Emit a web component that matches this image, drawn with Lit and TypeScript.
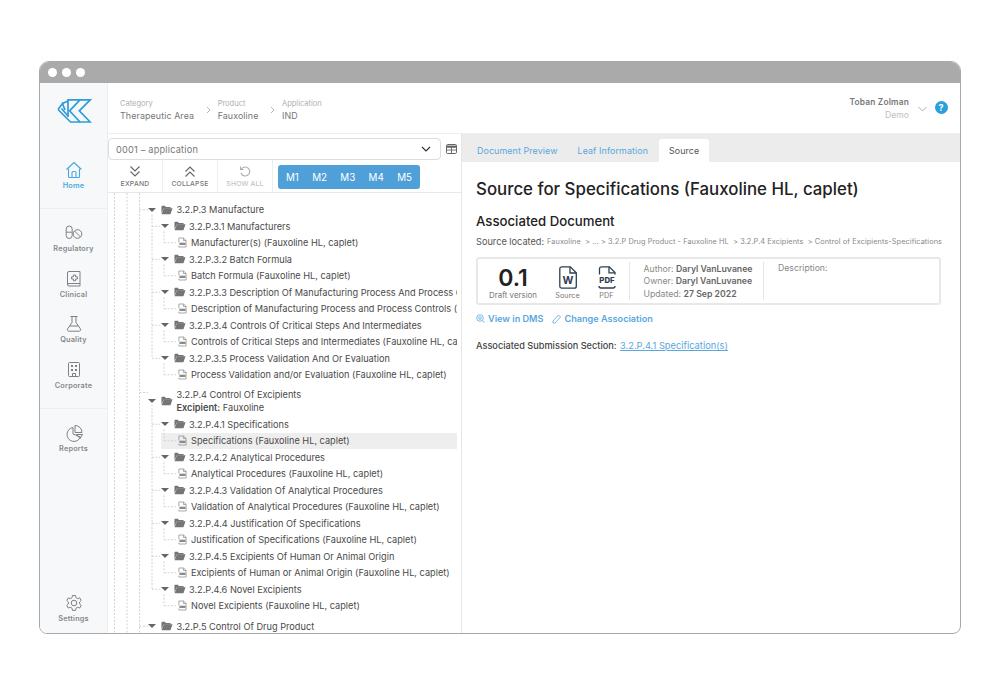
import { LitElement, html, css, svg } from "lit";
import { customElement } from "lit/decorators.js";

type Row = { l: number; t: string; sub?: string; sel?: boolean; mt?: number };
const ROWS: Row[] = [
  { l: 3, t: "3.2.P.3 Manufacture" },
  { l: 4, t: "3.2.P.3.1 Manufacturers" },
  { l: 5, t: "Manufacturer(s) (Fauxoline HL, caplet)" },
  { l: 4, t: "3.2.P.3.2 Batch Formula" },
  { l: 5, t: "Batch Formula (Fauxoline HL, caplet)" },
  { l: 4, t: "3.2.P.3.3 Description Of Manufacturing Process And Process Controls" },
  { l: 5, t: "Description of Manufacturing Process and Process Controls (Fauxoline HL, caplet)" },
  { l: 4, t: "3.2.P.3.4 Controls Of Critical Steps And Intermediates" },
  { l: 5, t: "Controls of Critical Steps and Intermediates (Fauxoline HL, caplet)" },
  { l: 4, t: "3.2.P.3.5 Process Validation And Or Evaluation" },
  { l: 5, t: "Process Validation and/or Evaluation (Fauxoline HL, caplet)" },
  { l: 3, t: "3.2.P.4 Control Of Excipients", sub: "Fauxoline" },
  { l: 4, t: "3.2.P.4.1 Specifications" },
  { l: 5, t: "Specifications (Fauxoline HL, caplet)", sel: true },
  { l: 4, t: "3.2.P.4.2 Analytical Procedures" },
  { l: 5, t: "Analytical Procedures (Fauxoline HL, caplet)" },
  { l: 4, t: "3.2.P.4.3 Validation Of Analytical Procedures" },
  { l: 5, t: "Validation of Analytical Procedures (Fauxoline HL, caplet)" },
  { l: 4, t: "3.2.P.4.4 Justification Of Specifications" },
  { l: 5, t: "Justification of Specifications (Fauxoline HL, caplet)" },
  { l: 4, t: "3.2.P.4.5 Excipients Of Human Or Animal Origin" },
  { l: 5, t: "Excipients of Human or Animal Origin (Fauxoline HL, caplet)" },
  { l: 4, t: "3.2.P.4.6 Novel Excipients" },
  { l: 5, t: "Novel Excipients (Fauxoline HL, caplet)" },
  { l: 3, t: "3.2.P.5 Control Of Drug Product", mt: 4 },
];
const ROW_H = 16.5;
const TREE_TOP = 8.5;

const folderIcon = html`<svg class="folder" viewBox="0 0 13 10"><path d="M0.5 1.200c0-.4.3-.7.7-.7h3l1 1.200h4.600c.4 0 .7.3.7.7v.9H3L.5 8.500z" fill="#757575"/><path d="M3.200 3.200h9.300L10.200 9.500H.6z" fill="#757575"/></svg>`;
const pdfIcon = html`<svg class="pdf" viewBox="0 0 10 12"><path d="M1 6V1h5.200L9 3.600V11H1V9.500" fill="none" stroke="#8a8a8a" stroke-width=".8"/><path d="M6 1v2.800h3" fill="none" stroke="#8a8a8a" stroke-width=".8"/><rect x="1.600" y="6.200" width="6.800" height="2.600" fill="#8a8a8a"/></svg>`;

@customElement("app-root")
export class AppRoot extends LitElement {
  static styles = css`
    :host { display: block; width: 1000px; height: 686px; background: #fff; font-family: Inter, "Liberation Sans", sans-serif; overflow: hidden; color: #333; }
    .window { box-sizing: border-box; margin: 61px 39px 0 39px; height: 573px; border: 1px solid #a9a9a9; border-radius: 10px 10px 8px 8px; overflow: hidden; display: flex; flex-direction: column; background: #fff; }
    .titlebar { flex: 0 0 21px; background: #a9aaa9; display: flex; align-items: center; gap: 5px; padding-left: 7.5px; }
    .dot { width: 9px; height: 9px; border-radius: 50%; background: #fff; }
    .body { flex: 1; display: flex; min-height: 0; }

    .side { flex: 0 0 67px; background: #f6f8fa; border-right: 1px solid #eceef0; display: flex; flex-direction: column; align-items: stretch; }
    .logo { height: 77px; display: flex; justify-content: center; padding-top: 16px; padding-left: 1px; box-sizing: border-box; }
    .logo svg { width: 35px; height: 25px; }
    .nav { height: 30px; display: flex; flex-direction: column; align-items: center; color: #85888c; font-size: 7.3px; font-weight: 600; letter-spacing: .2px; }
    .nav svg { width: 20px; height: 20px; flex: none; }
    .nav span { margin-top: 1px; line-height: 9px; }
    .nav.on { color: #4aa8e0; }
    .gap { margin-bottom: 15.5px; }
    .divider { height: 1px; background: #eceef0; margin: 18px 0 14px; }
    .settings { margin-top: auto; margin-bottom: 10px; }

    .main { flex: 1; min-width: 0; display: flex; flex-direction: column; }
    .header { flex: 0 0 51px; box-sizing: border-box; border-bottom: 1px solid #eee; display: flex; align-items: center; padding: 5px 12.5px 0 12px; }
    .crumb { display: flex; flex-direction: column; }
    .crumb small { font-size: 7.5px; line-height: 10px; color: #b0b0b0; }
    .crumb b { font-weight: 400; font-size: 8.9px; line-height: 13px; color: #777; letter-spacing: .1px; }
    .sep { width: 5px; height: 8px; margin: -2px 7px 0 11.5px; }
    .user { margin-left: auto; text-align: right; display: flex; flex-direction: column; margin-top: -3px; }
    .user b { font-size: 8.3px; line-height: 12px; font-weight: 600; color: #777; letter-spacing: .2px; }
    .user span { font-size: 8.6px; line-height: 14px; color: #c0c0c0; }
    .chev { width: 9px; height: 6px; margin: -3px 8px 0 8.5px; }
    .help { width: 13px; height: 13px; border-radius: 50%; background: #2b9fdc; color: #fff; font-size: 9px; font-weight: 700; display: flex; align-items: center; justify-content: center; margin-top: -6px; }

    .content { flex: 1; display: flex; min-height: 0; }
    .left { flex: 0 0 354px; width: 354px; min-width: 0; box-sizing: border-box; border-right: 1px solid #e6e6e6; display: flex; flex-direction: column; min-height: 0; }
    .selrow { flex: 0 0 26px; display: flex; align-items: flex-end; gap: 5px; }
    .select { width: 333px; height: 22px; box-sizing: border-box; border: 1px solid #ddd; border-radius: 4px; display: flex; align-items: center; justify-content: space-between; padding: 0 9px 0 7px; font-size: 9.2px; color: #777; letter-spacing: .2px; }
    .select svg { width: 10px; height: 6px; }
    .tbl { width: 11px; height: 10px; margin-bottom: 6px; }
    .tools { flex: 0 0 32px; display: flex; align-items: stretch; border-bottom: 1px solid #e8e8e8; }
    .tool { width: 55px; box-sizing: border-box; border-right: 1px solid #eee; display: flex; flex-direction: column; align-items: center; padding-top: 5px; font-size: 6.8px; letter-spacing: .2px; color: #777; font-weight: 500; }
    .tool svg { width: 12px; height: 13px; margin-bottom: 1px; }
    .tool.off { color: #c4c4c4; }
    .ms { margin: 5px 0 0 5px; width: 142px; height: 24px; background: #4f9fd8; border-radius: 3px; display: flex; align-items: center; justify-content: space-between; color: #fff; font-size: 9.8px; padding: 0 8px; box-sizing: border-box; }
    .tree { position: relative; flex: 1; min-width: 0; overflow: hidden; padding-top: 8.5px; padding-right: 4px; }
    .guides { position: absolute; left: 0; top: 0; width: 354px; height: 440px; pointer-events: none; }
    .row { display: flex; align-items: center; height: 16.5px; white-space: nowrap; font-size: 9.2px; color: #4a4a4a; overflow: hidden; box-sizing: border-box; }
    .row.two { height: 33px; padding-top: 2px; }
    .row.sel { background: #eee; margin-left: 53px; }
    .lines { display: flex; flex-direction: column; line-height: 13px; }
    .lines b { font-weight: 600; }
    .arrow { width: 0; height: 0; border-left: 4px solid transparent; border-right: 4px solid transparent; border-top: 4.5px solid #666; margin-right: 5px; flex: none; }
    .folder { width: 12px; height: 10px; flex: none; margin-right: 3.5px; }
    .pdf { width: 9px; height: 11px; flex: none; margin-right: 4px; }

    .right { flex: 1; min-width: 0; display: flex; flex-direction: column; }
    .tabs { flex: 0 0 28px; background: #ececec; display: flex; align-items: flex-end; padding-left: 5px; font-size: 8.9px; letter-spacing: .1px; }
    .tab { height: 23px; display: flex; align-items: center; padding: 0 10px; color: #5aa7de; }
    .tab.on { background: #fff; color: #555; border-radius: 3px 3px 0 0; margin-left: 1px; }
    .doc { padding: 15px 14px 0 14px; }
    h1 { margin: 0; font-size: 16.85px; line-height: 24px; font-weight: 500; color: #222; white-space: nowrap; }
    h2 { margin: 10px 0 0; font-size: 13.2px; line-height: 20px; font-weight: 500; color: #222; }
    .located { margin-top: 2px; height: 16px; display: flex; align-items: center; font-size: 9.2px; color: #555; white-space: nowrap; }
    .located span { font-size: 7.3px; color: #888; margin-left: 3px; letter-spacing: .1px; }
    .card { margin-top: 8px; width: 465px; height: 48px; box-sizing: border-box; border: 2px solid #e8e8e8; border-radius: 3px; display: flex; align-items: center; }
    .ver { width: 70px; margin-top: 4px; display: flex; flex-direction: column; align-items: center; color: #777; font-size: 7.9px; }
    .ver b { font-size: 23px; line-height: 23px; font-weight: 600; color: #222; }
    .ic { width: 39px; margin-top: 4px; display: flex; flex-direction: column; align-items: center; color: #777; font-size: 7.2px; letter-spacing: .1px; }
    .ic svg { width: 18px; height: 23px; margin-bottom: 2px; }
    .vr { width: 1px; height: 38px; background: #e6e6e6; margin-left: 2.5px; }
    .meta { width: 117px; margin: 1px 0 0 14px; font-size: 8.7px; line-height: 12.5px; color: #888; white-space: nowrap; }
    .meta b { font-weight: 600; color: #666; }
    .desc { margin-left: 14px; align-self: flex-start; padding-top: 4px; font-size: 8.7px; color: #888; }
    .links { margin-top: 8px; display: flex; align-items: center; gap: 3px; color: #5aa7de; font-size: 9.15px; font-weight: 600; line-height: 12px; }
    .links svg { width: 9px; height: 10px; }
    .links span { margin-right: 6px; }
    .assoc { margin-top: 14px; font-size: 9.2px; font-weight: 500; color: #444; line-height: 13px; }
    .assoc a { color: #5aa7de; text-decoration: underline; font-weight: 400; margin-left: 1px; font-size: 9.3px; }
  `;

  private guides() {
    const c = "#d2d2d2";
    const dash = "2 1.5";
    const out: unknown[] = [];
    const line = (x1: number, y1: number, x2: number, y2: number) =>
      svg`<line x1=${x1} y1=${y1} x2=${x2} y2=${y2} stroke=${c} stroke-width="1" stroke-dasharray=${dash}/>`;
    for (const x of [6.5, 19, 31.5]) out.push(line(x, 0, x, 440));
    let y = TREE_TOP;
    const centers = ROWS.map((r) => {
      y += r.mt ?? 0;
      const h = r.sub ? ROW_H * 2 : ROW_H;
      const cy = y + h / 2;
      y += h;
      return cy;
    });
    let l3 = 0;
    let l4 = 0;
    ROWS.forEach((r, i) => {
      const cy = centers[i];
      if (r.l === 3) {
        const hy = r.sub ? cy - 7 : cy;
        out.push(line(31.5, hy, 40, hy));
        l3 = cy + 5;
      } else if (r.l === 4) {
        out.push(line(44, cy, 52, cy));
        l4 = cy + 5;
        let j = i + 1;
        while (j < ROWS.length && ROWS[j].l > 4) j++;
        if (!ROWS[j] || ROWS[j].l === 3) out.push(line(44, l3, 44, cy));
      } else {
        out.push(line(56, l4, 56, cy));
        out.push(line(56, cy, 68, cy));
      }
    });
    return out;
  }

  private row(r: Row) {
    const pad = r.l === 3 ? 40 : r.l === 4 ? 52.5 : 70;
    const left = r.sel ? pad - 53 : pad;
    return html`<div class="row ${r.sub ? "two" : ""} ${r.sel ? "sel" : ""}" style="padding-left:${left}px;margin-top:${r.mt ?? 0}px">
      ${r.l < 5 ? html`<i class="arrow"></i>${folderIcon}` : pdfIcon}
      ${r.sub
        ? html`<div class="lines"><span>${r.t}</span><span><b>Excipient:</b> ${r.sub}</span></div>`
        : html`<span>${r.t}</span>`}
    </div>`;
  }

  render() {
    const g = "#7d8185";
    return html`<div class="window">
      <div class="titlebar"><i class="dot"></i><i class="dot"></i><i class="dot"></i></div>
      <div class="body">
        <aside class="side">
          <div class="logo">
            <svg viewBox="0 0 35 25" fill="none" stroke="#2e9cd8" stroke-width="1.700" stroke-linejoin="miter">
              <path d="M23 .8H33.200L22.300 11.800L33.200 23H23L12.600 11.800z"/>
              <path d="M23 .8H11V18"/>
              <path d="M1 10.500L5.500 4.500L8 11"/>
              <path d="M5.500 4.500L11 2"/>
              <path d="M1 10.500L13.500 23H23"/>
              <path d="M4.500 9.500L11 17"/>
            </svg>
          </div>
          <div class="nav on">
            <svg viewBox="0 0 20 20" fill="none" stroke="#4aa8e0" stroke-width="1.100" stroke-linejoin="round"><path d="M2.500 9.500L10 2.500l7.500 7"/><path d="M4.500 8.500V16.500a1 1 0 001 1h9a1 1 0 001-1V8.500"/><path d="M8 17.500v-5a1 1 0 011-1h2a1 1 0 011 1v5"/></svg>
            <span>Home</span>
          </div>
          <div class="divider"></div>
          <div class="nav gap">
            <svg viewBox="0 0 20 20" fill="none" stroke=${g} stroke-width="1"><rect x="2.200" y="3" width="6" height="12.500" rx="3"/><path d="M2.200 9.200h6"/><circle cx="13.500" cy="11" r="4.300"/><path d="M10.500 8l6 6"/></svg>
            <span>Regulatory</span>
          </div>
          <div class="nav gap">
            <svg viewBox="0 0 20 20" fill="none" stroke=${g} stroke-width="1"><path d="M5 2.500h11v12H5a1.500 1.500 0 00-1.500 1.500V4A1.500 1.500 0 015 2.500z"/><path d="M3.500 16A1.500 1.500 0 005 17h11v-2.500"/><path d="M9.400 6h2.200v1.800h1.800V10h-1.800v1.800H9.400V10H7.600V7.800h1.800z"/></svg>
            <span>Clinical</span>
          </div>
          <div class="nav gap">
            <svg viewBox="0 0 20 20" fill="none" stroke=${g} stroke-width="1"><path d="M6.500 2.500h7M8 2.500v6L3.500 15a1.500 1.500 0 001.300 2.200h10.400a1.500 1.500 0 001.300-2.200L12 8.500v-6"/><path d="M5.500 12h9"/></svg>
            <span>Quality</span>
          </div>
          <div class="nav">
            <svg viewBox="0 0 20 20" fill="none" stroke=${g} stroke-width="1"><rect x="4.500" y="2.500" width="11" height="14" rx="1"/><path d="M8.500 16.500v-3h3v3"/><g fill=${g} stroke="none"><rect x="7" y="5" width="2" height="2"/><rect x="11" y="5" width="2" height="2"/><rect x="7" y="9" width="2" height="2"/><rect x="11" y="9" width="2" height="2"/></g></svg>
            <span>Corporate</span>
          </div>
          <div class="divider"></div>
          <div class="nav">
            <svg viewBox="0 0 20 20" fill="none" stroke=${g} stroke-width="1" stroke-linejoin="round"><path d="M9 4.500a7 7 0 107.500 9.500L9 11z"/><path d="M11 2.500a7 7 0 017 7h-7z"/><path d="M12.500 11.500h6l-2.500 4z"/></svg>
            <span>Reports</span>
          </div>
          <div class="nav settings">
            <svg viewBox="0 0 20 20" fill="none" stroke=${g} stroke-width="1" stroke-linejoin="round"><circle cx="10" cy="10" r="2.800"/><path d="M8.500 2.500h3l.5 2.200 1.600.9 2.100-.7 1.500 2.600-1.600 1.500v1.900l1.600 1.500-1.500 2.600-2.100-.7-1.600.9-.5 2.200h-3l-.5-2.200-1.600-.9-2.100.7-1.500-2.600 1.600-1.500V9l-1.600-1.500 1.500-2.600 2.100.7 1.600-.9z"/></svg>
            <span>Settings</span>
          </div>
        </aside>
        <div class="main">
          <header class="header">
            <div class="crumb"><small>Category</small><b>Therapeutic Area</b></div>
            <svg class="sep" viewBox="0 0 5 8" fill="none" stroke="#aaa" stroke-width=".8"><path d="M1 1l3 3-3 3"/></svg>
            <div class="crumb"><small>Product</small><b>Fauxoline</b></div>
            <svg class="sep" viewBox="0 0 5 8" fill="none" stroke="#aaa" stroke-width=".8"><path d="M1 1l3 3-3 3"/></svg>
            <div class="crumb"><small>Application</small><b>IND</b></div>
            <div class="user"><b>Toban Zolman</b><span>Demo</span></div>
            <svg class="chev" viewBox="0 0 9 6" fill="none" stroke="#999" stroke-width=".8"><path d="M.5 1l4 4 4-4"/></svg>
            <div class="help">?</div>
          </header>
          <div class="content">
            <section class="left">
              <div class="selrow">
                <div class="select">0001 – application
                  <svg viewBox="0 0 10 6" fill="none" stroke="#333" stroke-width="1.200"><path d="M1 1l4 4 4-4"/></svg>
                </div>
                <svg class="tbl" viewBox="0 0 11 10"><rect x=".5" y=".5" width="10" height="9" rx="1.200" fill="none" stroke="#666"/><path d="M.5 2h10v1.300H.5zM5.500 2v7M.5 6h10" stroke="#666" fill="#666" stroke-width=".9"/></svg>
              </div>
              <div class="tools">
                <div class="tool"><svg viewBox="0 0 12 13" fill="none" stroke="#666" stroke-width="1.100"><path d="M1.500 1.500L6 6l4.500-4.500M1.500 6.500L6 11l4.500-4.500"/></svg>EXPAND</div>
                <div class="tool"><svg viewBox="0 0 12 13" fill="none" stroke="#666" stroke-width="1.100"><path d="M1.500 6.500L6 2l4.500 4.500M1.500 11.500L6 7l4.500 4.500"/></svg>COLLAPSE</div>
                <div class="tool off"><svg viewBox="0 0 12 13" fill="none" stroke="#aaa" stroke-width="1.100"><path d="M2.500 4A4.500 4.500 0 1 1 2 8"/><path d="M1.500 1.500V4.500H4.500"/></svg>SHOW ALL</div>
                <div class="ms"><span>M1</span><span>M2</span><span>M3</span><span>M4</span><span>M5</span></div>
              </div>
              <div class="tree">
                ${ROWS.map((r) => this.row(r))}
                <svg class="guides" viewBox="0 0 354 440">${this.guides()}</svg>
              </div>
            </section>
            <section class="right">
              <nav class="tabs">
                <div class="tab">Document Preview</div>
                <div class="tab">Leaf Information</div>
                <div class="tab on">Source</div>
              </nav>
              <div class="doc">
                <h1>Source for Specifications (Fauxoline HL, caplet)</h1>
                <h2>Associated Document</h2>
                <div class="located">Source located:<span>Fauxoline &nbsp;&gt; ... &gt; 3.2.P Drug Product - Fauxoline HL &nbsp;&gt; 3.2.P.4 Excipients &nbsp;&gt; Control of Excipients-Specifications</span></div>
                <div class="card">
                  <div class="ver"><b>0.1</b>Draft version</div>
                  <div class="ic">
                    <svg viewBox="0 0 18 23" fill="none" stroke="#2e3e50" stroke-width="1.300"><path d="M.8 20.200V2.800a2 2 0 012-2h8.500l6 6v13.400a2 2 0 01-2 2H2.800a2 2 0 01-2-2z"/><path d="M11 .8v6.200h6"/><text x="9" y="18.300" text-anchor="middle" font-size="10.500" font-weight="700" fill="#2e3e50" stroke="none" font-family="Inter, sans-serif">W</text></svg>
                    Source
                  </div>
                  <div class="ic">
                    <svg viewBox="0 0 18 23" fill="none" stroke="#2e3e50" stroke-width="1.300"><path d="M1.500 8.500V2.800a2 2 0 012-2h7.800l5.700 5.700v2"/><path d="M11 .8v6h6"/><path d="M1 20c0 1 1 2 2 2h12c1 0 2-1 2-2"/><text x="9" y="17" text-anchor="middle" font-size="7.800" font-weight="800" fill="#2e3e50" stroke="none" font-family="Inter, sans-serif">PDF</text></svg>
                    PDF
                  </div>
                  <i class="vr"></i>
                  <div class="meta">Author: <b>Daryl VanLuvanee</b><br />Owner: <b>Daryl VanLuvanee</b><br />Updated: <b>27 Sep 2022</b></div>
                  <i class="vr"></i>
                  <div class="desc">Description:</div>
                </div>
                <div class="links">
                  <svg viewBox="0 0 9 10" fill="none" stroke="#5aa7de" stroke-width=".8"><circle cx="4" cy="4" r="3.300"/><circle cx="4" cy="4" r="1.300"/><path d="M6.500 6.500L8.500 9"/></svg>
                  <span>View in DMS</span>
                  <svg viewBox="0 0 9 10" fill="none" stroke="#5aa7de" stroke-width=".8"><path d="M6.500 1l2 2L3 9H1V7z"/></svg>
                  <span>Change Association</span>
                </div>
                <div class="assoc">Associated Submission Section: <a>3.2.P.4.1 Specification(s)</a></div>
              </div>
            </section>
          </div>
        </div>
      </div>
    </div>`;
  }
}
